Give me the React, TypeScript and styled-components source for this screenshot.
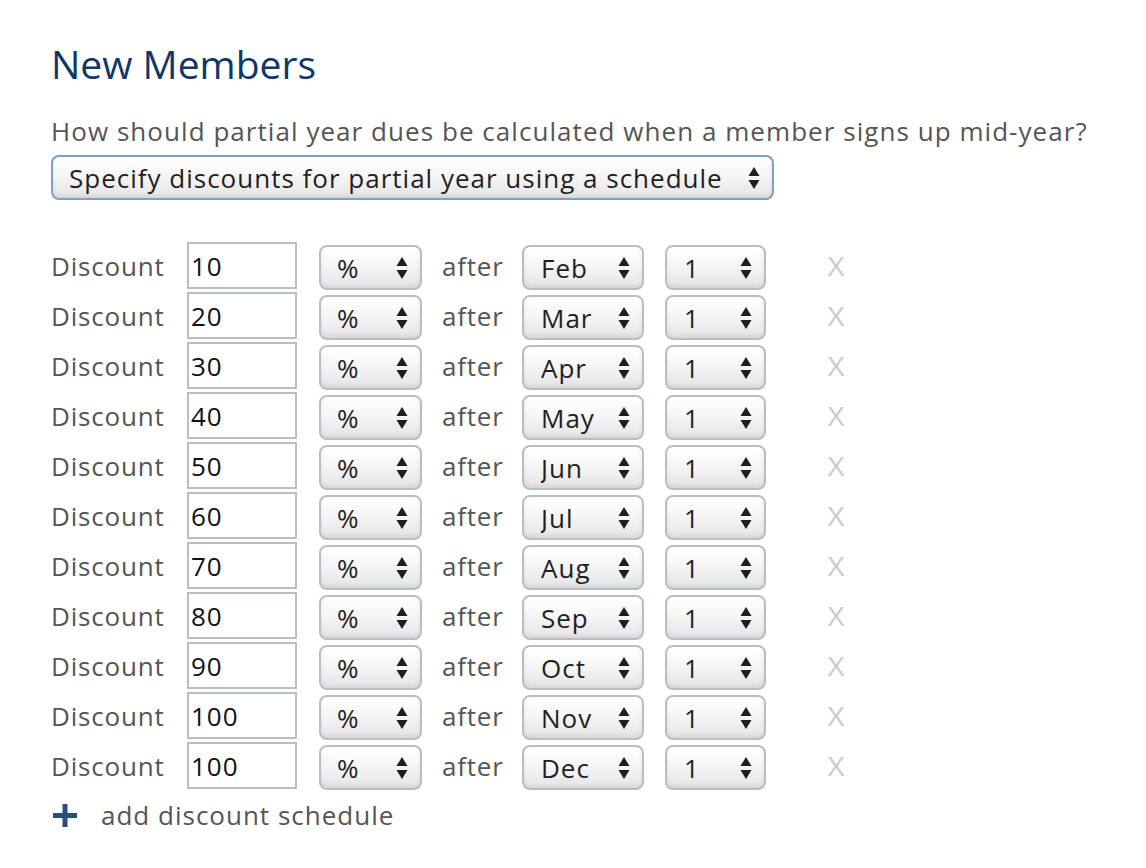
import React from "react";
import styled, { createGlobalStyle } from "styled-components";

const Global = createGlobalStyle`
  html, body { margin: 0; padding: 0; background: #ffffff; }
  body { font-family: "Open Sans", "Liberation Sans", sans-serif; }
`;

const Page = styled.div`
  padding: 36px 0 0 51px;
  width: 1146px;
  height: 868px;
  box-sizing: border-box;
`;

const Title = styled.h1`
  margin: 0;
  font-size: 39px;
  font-weight: 400;
  line-height: 56px;
  color: #0f3768;
`;

const Question = styled.p`
  margin: 23px 0 0 0;
  font-size: 26px;
  letter-spacing: 1.05px;
  line-height: 32px;
  color: #555555;
`;

const SelectWrap = styled.div<{ $w: number; $h: number; $main?: boolean }>`
  position: relative;
  width: ${(p) => p.$w}px;
  height: ${(p) => p.$h}px;
  box-sizing: border-box;
  border: ${(p) => (p.$main ? "2px solid #7f9fc4" : "2px solid #b9bdc6")};
  border-radius: 8px;
  background: linear-gradient(#ffffff 0%, #f6f6f6 45%, #e4e4e4 100%);
  box-shadow: inset 0 -2px 4px rgba(0, 0, 0, 0.08);
`;

const NativeSelect = styled.select<{ $pl: number }>`
  appearance: none;
  -webkit-appearance: none;
  border: none;
  background: transparent;
  width: 100%;
  height: 100%;
  padding: 0 0 0 ${(p) => p.$pl}px;
  margin: 0;
  font-family: inherit;
  font-size: 26px;
  letter-spacing: 1px;
  color: #1f1f1f;
  outline: none;
`;

const Arrows = styled.svg`
  position: absolute;
  right: 12px;
  top: 50%;
  transform: translateY(-50%);
  pointer-events: none;
`;

const MainSelectBox = styled.div`
  margin-top: 8px;
`;

const Rows = styled.div`
  margin-top: 41px;
  display: flex;
  flex-direction: column;
  gap: 3px;
`;

const Row = styled.div`
  display: grid;
  grid-template-columns: 136px 110px 22px 103px 20px 80px 122px 21px 101px 61px 30px;
  align-items: center;
  height: 47px;
`;

const Label = styled.span<{ $col?: number }>`
  grid-column: ${(p) => p.$col ?? 1};
  font-size: 26px;
  letter-spacing: 0.8px;
  color: #555555;
`;

const AmountInput = styled.input`
  width: 110px;
  height: 47px;
  box-sizing: border-box;
  border: 2px solid #b9bdc6;
  padding: 0 0 0 2px;
  margin: 0;
  font-family: inherit;
  font-size: 26px;
  letter-spacing: 1px;
  color: #111111;
  outline: none;
  background: #ffffff;
`;

const Cell = styled.div<{ $col: number }>`
  grid-column: ${(p) => p.$col};
  padding-top: 4px;
`;

const Remove = styled.span`
  grid-column: 11;
  padding-top: 4px;
  font-size: 27px;
  color: #cccccc;
  font-family: "Liberation Sans", sans-serif;
`;

const AddLine = styled.div`
  margin-top: 9px;
  display: flex;
  align-items: center;
  gap: 24px;
  padding-left: 2px;
`;

const AddText = styled.span`
  font-size: 26px;
  letter-spacing: 1px;
  color: #555555;
`;

const ArrowIcon = () => (
  <Arrows width="12" height="24" viewBox="0 0 12 24">
    <path d="M6 1 L11.5 10 L0.5 10 Z" fill="#1e1e1e" />
    <path d="M0.5 14 L11.5 14 L6 23 Z" fill="#1e1e1e" />
  </Arrows>
);

const Select = ({ w, h, pl, value, options, main }: { w: number; h: number; pl: number; value: string; options: string[]; main?: boolean }) => (
  <SelectWrap $w={w} $h={h} $main={main}>
    <NativeSelect $pl={pl} defaultValue={value}>
      {options.map((o) => (
        <option key={o} value={o}>
          {o}
        </option>
      ))}
    </NativeSelect>
    <ArrowIcon />
  </SelectWrap>
);

const months = ["Jan", "Feb", "Mar", "Apr", "May", "Jun", "Jul", "Aug", "Sep", "Oct", "Nov", "Dec"];
const days = Array.from({ length: 31 }, (_, i) => String(i + 1));

const schedule = [
  { v: "10", m: "Feb" },
  { v: "20", m: "Mar" },
  { v: "30", m: "Apr" },
  { v: "40", m: "May" },
  { v: "50", m: "Jun" },
  { v: "60", m: "Jul" },
  { v: "70", m: "Aug" },
  { v: "80", m: "Sep" },
  { v: "90", m: "Oct" },
  { v: "100", m: "Nov" },
  { v: "100", m: "Dec" },
];

export default function App() {
  return (
    <Page>
      <Global />
      <Title>New Members</Title>
      <Question>How should partial year dues be calculated when a member signs up mid-year?</Question>
      <MainSelectBox>
        <Select
          main
          w={723}
          h={45}
          pl={16}
          value="Specify discounts for partial year using a schedule"
          options={["Prorate dues by month", "No discount for partial year", "Specify discounts for partial year using a schedule"]}
        />
      </MainSelectBox>
      <Rows>
        {schedule.map((r, i) => (
          <Row key={i}>
            <Label>Discount</Label>
            <AmountInput defaultValue={r.v} />
            <Cell $col={4}>
              <Select w={103} h={45} pl={16} value="%" options={["%", "$"]} />
            </Cell>
            <Label $col={6}>after</Label>
            <Cell $col={7}>
              <Select w={122} h={45} pl={17} value={r.m} options={months} />
            </Cell>
            <Cell $col={9}>
              <Select w={101} h={45} pl={17} value="1" options={days} />
            </Cell>
            <Remove>X</Remove>
          </Row>
        ))}
      </Rows>
      <AddLine>
        <svg width="24" height="23" viewBox="0 0 24 23">
          <rect x="0" y="9" width="24" height="5" fill="#2a4f7f" />
          <rect x="9.5" y="0" width="5" height="23" fill="#2a4f7f" />
        </svg>
        <AddText>add discount schedule</AddText>
      </AddLine>
    </Page>
  );
}
